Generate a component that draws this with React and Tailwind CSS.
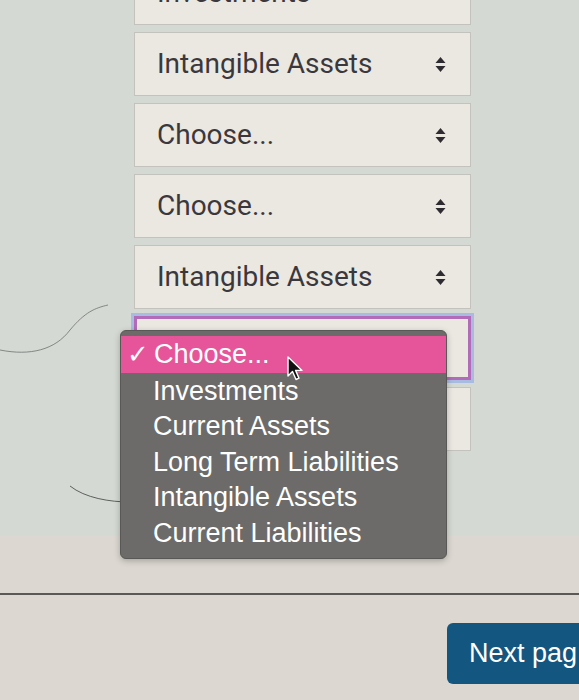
import React from "react";

function Arrows() {
  return (
    <svg width="11" height="17" viewBox="0 0 11 17" className="shrink-0">
      <path d="M5.5 1 L10.5 7 L0.5 7 Z" fill="#2f2c31" />
      <path d="M5.5 16 L10.5 10 L0.5 10 Z" fill="#2f2c31" />
    </svg>
  );
}

function SelectBox({ label, focused, arrows = true }) {
  return (
    <div
      className={`h-[64px] w-[337px] shrink-0 flex items-center justify-between pl-[22px] pr-[24px] bg-[#ebe8e2] border ${
        focused
          ? "border-[3px] border-[#b26bb8] outline outline-[3px] outline-[#a9bbe0]"
          : "border-[#c3c2bd]"
      }`}
    >
      <span className="text-[28px] text-[#3b383d] font-['Roboto',sans-serif] leading-none">
        {label}
      </span>
      {arrows && label && <Arrows />}
    </div>
  );
}

export default function App() {
  const items = [
    "Investments",
    "Current Assets",
    "Long Term Liabilities",
    "Intangible Assets",
    "Current Liabilities",
  ];
  return (
    <div className="relative w-[579px] h-[700px] overflow-hidden bg-[#dcd8d1]">
      <div className="h-[536px] bg-[#d5d9d4] overflow-hidden">
        <div className="flex flex-col gap-[7px] pl-[134px] mt-[-39px]">
          <SelectBox label="Investments" arrows={false} />
          <SelectBox label="Intangible Assets" />
          <SelectBox label="Choose..." />
          <SelectBox label="Choose..." />
          <SelectBox label="Intangible Assets" />
          <SelectBox label="" focused />
          <SelectBox label="" />
        </div>
      </div>
      <div className="h-[57px]" />
      <div className="h-[2px] bg-[#5a5957]" />
      <div className="flex justify-start pl-[447px] pt-[28px]">
        <div className="h-[61px] w-[132px] shrink-0 rounded-l-[6px] bg-[#13567f] flex items-center pl-[22px] overflow-hidden">
          <span className="text-[27px] text-white font-['Liberation_Sans',sans-serif] whitespace-nowrap">
            Next pag
          </span>
        </div>
      </div>

      {/* hair lines (photo artifacts) */}
      <svg className="absolute left-0 top-0 pointer-events-none" width="579" height="700">
        <path d="M0 350 C 30 356, 55 350, 70 330 C 85 312, 95 308, 108 305" stroke="#6f716f" strokeWidth="0.8" fill="none" />
        <path d="M70 486 C 85 498, 110 502, 130 502 L 150 502" stroke="#4f514f" strokeWidth="0.9" fill="none" />
      </svg>

      {/* dropdown menu */}
      <div className="absolute left-[120px] top-[330px] w-[327px] h-[229px] rounded-[6px] bg-[#6c6b69] border border-[#595856] shadow-[0_2px_6px_rgba(0,0,0,0.25)] pt-[5px] font-['Liberation_Sans',sans-serif] text-white text-[27px]">
        <div className="h-[37px] bg-[#e6559a] flex items-center pl-[6px] whitespace-nowrap">
          <span className="w-[27px] text-[26px]">✓</span>
          <span>Choose...</span>
        </div>
        {items.map((t) => (
          <div key={t} className="h-[35.5px] flex items-center pl-[32px] whitespace-nowrap">
            {t}
          </div>
        ))}
      </div>

      {/* mouse cursor */}
      <svg className="absolute left-[287px] top-[356px]" width="18" height="26" viewBox="0 0 18 26">
        <path d="M1 1 L1 20 L5.5 15.5 L9 23.5 L12 22.2 L8.6 14.4 L15 14.4 Z" fill="#111" stroke="#fff" strokeWidth="1.4" strokeLinejoin="round" />
      </svg>
    </div>
  );
}
